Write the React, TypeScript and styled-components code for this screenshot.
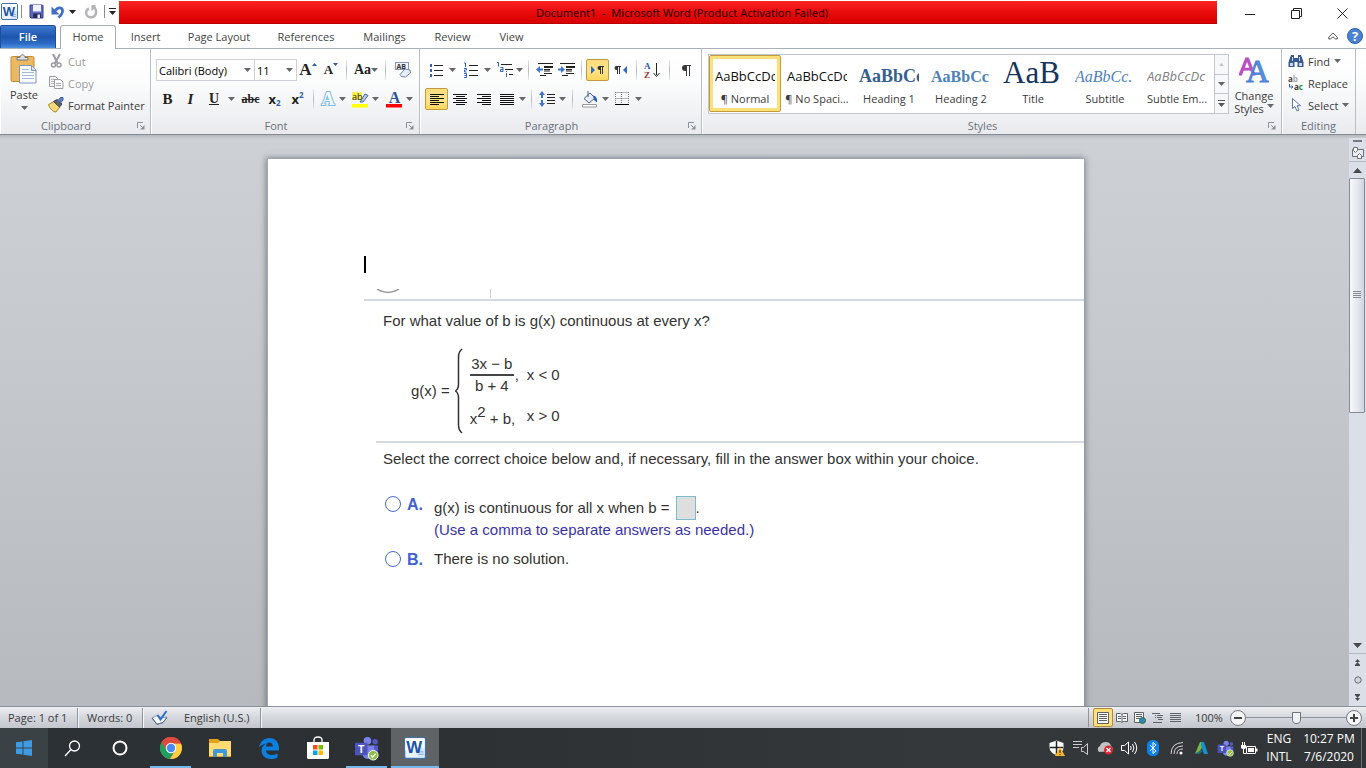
import React from 'react';
import styled, { createGlobalStyle, css } from 'styled-components';

const ui = `'Open Sans', 'Noto Sans', sans-serif`;
const serif = `'Liberation Serif', serif`;

const GlobalStyle = createGlobalStyle`
  * { box-sizing: border-box; }
  body { margin: 0; font-family: ${ui}; font-size: 11px; color: #3b3b3b; overflow: hidden; }
  button, input, select { font: inherit; color: inherit; margin: 0; }
  button { border: 0; padding: 0; background: none; }
  svg { display: block; flex: none; }
  p { margin: 0; }
`;

const Shell = styled.div`
  display: flex;
  flex-direction: column;
  height: 100vh;
  background: #fff;
`;

/* ---------- title bar ---------- */

const TitleBar = styled.header`
  display: flex;
  align-items: flex-start;
  height: 25px;
  flex: none;
`;
const QuickAccess = styled.div`
  display: flex;
  align-items: center;
  width: 119px;
  height: 23px;
`;
const QuickButton = styled.button<{ $w: number }>`
  display: grid;
  place-items: center;
  width: ${(p) => p.$w}px;
  height: 22px;
`;
const QuickDivider = styled.span`
  width: 1px;
  height: 13px;
  background: #8d8d8d;
`;
const TitleText = styled.h1`
  flex: 1;
  margin: 1px 0 0;
  height: 23px;
  line-height: 23px;
  border-bottom: 1px solid #b80000;
  background: linear-gradient(#ff2424, #e80c0c 50%, #d80000);
  color: #2a0000;
  font-family: 'Noto Sans', sans-serif;
  font-size: 11px;
  font-weight: 400;
  text-align: center;
  white-space: pre;
  padding-left: 28px;
`;
const WindowButtons = styled.div`
  display: flex;
  padding-left: 10px;
  margin-right: 1px;
`;
const WindowButton = styled.button`
  display: grid;
  place-items: center;
  width: 46px;
  height: 27px;
`;

/* ---------- tabs ---------- */

const TabRow = styled.nav`
  display: flex;
  height: 24px;
  flex: none;
  border-bottom: 1px solid #aab0b7;
`;
const FileTab = styled.button`
  width: 56px;
  height: 23px;
  margin-right: 4px;
  padding-bottom: 1px;
  border: 1px solid #1e4f9e;
  border-bottom: 0;
  border-radius: 2px 3px 0 0;
  background: linear-gradient(#3d7ad0, #1d55ae 50%, #2d6cc6 80%, #4d8fe0);
  color: #fff;
  font-weight: 600;
`;
const Tab = styled.button<{ $w: number; $active?: boolean }>`
  width: ${(p) => p.$w}px;
  height: 24px;
  padding-bottom: 2px;
  color: #444;
  ${(p) =>
    p.$active &&
    css`
      border: 1px solid #a6acb3;
      border-bottom: 0;
      border-radius: 3px 3px 0 0;
      background: #fff;
    `}
`;
const TabTools = styled.div`
  display: flex;
  align-items: center;
  gap: 9px;
  margin-left: auto;
  padding: 0 3px 2px 0;
`;

/* ---------- ribbon ---------- */

const RibbonBar = styled.section`
  display: flex;
  height: 86px;
  flex: none;
  background: linear-gradient(#fff, #fbfcfc 40%, #e8eaee);
  border-bottom: 1px solid #878c93;
`;
const Group = styled.div<{ $w: number }>`
  display: flex;
  flex-direction: column;
  flex: none;
  width: ${(p) => p.$w}px;
  border-right: 1px solid #b9bec5;
  box-shadow: inset 1px 0 #fff;
`;
const GroupBody = styled.div`
  display: flex;
  height: 68px;
`;
const GroupFoot = styled.div<{ $launch: boolean }>`
  display: flex;
  align-items: center;
  height: 17px;
  padding-right: ${(p) => (p.$launch ? 5 : 0)}px;
  color: #6a7079;
  span {
    flex: 1;
    padding-right: ${(p) => (p.$launch ? 5 : 0)}px;
    text-align: center;
  }
`;
const Rows = styled.div<{ $left: number }>`
  display: flex;
  flex-direction: column;
  gap: 5px;
  padding: 9px 0 0 ${(p) => p.$left}px;
`;
const Row = styled.div`
  display: flex;
  align-items: center;
  height: 24px;
`;
const Tool = styled.button<{ $w: number; $on?: boolean; $left?: number }>`
  display: flex;
  align-items: center;
  justify-content: center;
  flex: none;
  width: ${(p) => p.$w}px;
  height: 22px;
  margin-left: ${(p) => p.$left ?? 0}px;
  font-family: ${serif};
  color: #222;
  ${(p) =>
    p.$on &&
    css`
      border: 1px solid #c29b3b;
      border-radius: 2px;
      background: linear-gradient(#fbdb7c, #fee58a 50%, #ffd75e);
    `}
`;
const Divider = styled.span<{ $w: number }>`
  display: flex;
  justify-content: center;
  flex: none;
  width: ${(p) => p.$w}px;
  height: 20px;
  &::before {
    content: '';
    width: 1px;
    background: linear-gradient(#e4e6ea, #b4b9c0, #e4e6ea);
  }
`;
const Glyph = styled.span<{ $size: number; $bold?: boolean; $italic?: boolean; $line?: string; $color?: string }>`
  font-family: ${serif};
  font-size: ${(p) => p.$size}px;
  line-height: 16px;
  font-weight: ${(p) => (p.$bold ? 700 : 400)};
  font-style: ${(p) => (p.$italic ? 'italic' : 'normal')};
  text-decoration: ${(p) => p.$line ?? 'none'};
  color: ${(p) => p.$color ?? '#222'};
`;
const SansGlyph = styled(Glyph)`
  font-family: ${ui};
`;
const Script = styled.span<{ $up?: boolean }>`
  align-self: ${(p) => (p.$up ? 'flex-start' : 'flex-end')};
  padding: 2px 0;
  font-family: ${ui};
  font-size: 8px;
  line-height: 10px;
  font-weight: 700;
  color: #2a5cab;
`;
const PickerBox = styled.label<{ $w: number }>`
  display: grid;
  align-items: center;
  width: ${(p) => p.$w}px;
  height: 22px;
  margin-right: -1px;
  border: 1px solid #cdd1d7;
  background: #fff;
  select {
    grid-area: 1 / 1;
    appearance: none;
    width: 100%;
    height: 20px;
    padding: 0 2px;
    border: 0;
    background: none;
    color: #000;
  }
  svg {
    grid-area: 1 / 1;
    justify-self: end;
    margin-right: 3px;
    pointer-events: none;
  }
`;
const PasteButton = styled.button`
  display: flex;
  flex-direction: column;
  align-items: center;
  width: 48px;
  padding-top: 5px;
  gap: 3px;
  line-height: 16px;
`;
const ClipList = styled.div`
  display: flex;
  flex-direction: column;
  padding-top: 1px;
`;
const LabelButton = styled.button<{ $muted?: boolean }>`
  display: flex;
  align-items: center;
  gap: 4px;
  height: 22px;
  white-space: nowrap;
  color: ${(p) => (p.$muted ? '#9a9a9a' : '#3b3b3b')};
`;
const EditButton = styled(LabelButton)`
  padding-left: 6px;
`;
const Gallery = styled.div`
  display: flex;
  width: 521px;
  height: 60px;
  margin: 5px 0 0 6px;
  border: 1px solid #c3c7cd;
  background: #fff;
`;
const StyleCell = styled.button<{ $on?: boolean }>`
  display: flex;
  flex-direction: column;
  align-items: center;
  width: 72px;
  height: 57px;
  padding: 4px 2px 0;
  ${(p) =>
    p.$on &&
    css`
      border: 1px solid #c29b3b;
      border-radius: 2px;
      box-shadow: inset 0 0 0 3px #ffdf78;
      padding-top: 3px;
    `}
`;
const Preview = styled.span<{ $font: string; $size: number; $line?: number; $color: string; $bold?: boolean; $italic?: boolean }>`
  width: 60px;
  height: 32px;
  overflow: hidden;
  white-space: nowrap;
  text-align: left;
  font-family: ${(p) => p.$font};
  font-size: ${(p) => p.$size}px;
  line-height: ${(p) => p.$line ?? 35}px;
  font-weight: ${(p) => (p.$bold ? 700 : 400)};
  font-style: ${(p) => (p.$italic ? 'italic' : 'normal')};
  color: ${(p) => p.$color};
`;
const StyleName = styled.span`
  line-height: 16px;
  white-space: nowrap;
`;
const GalleryScroll = styled.div`
  display: flex;
  flex-direction: column;
  margin-left: auto;
  width: 14px;
  border-left: 1px solid #c3c7cd;
  button {
    flex: 1;
    display: grid;
    place-items: center;
    background: #f7f8f9;
  }
  button + button {
    border-top: 1px solid #c3c7cd;
  }
`;
const ChangeStyles = styled.button`
  display: flex;
  flex-direction: column;
  align-items: center;
  width: 50px;
  padding-top: 6px;
  line-height: 13px;
  svg:first-child {
    margin-bottom: 6px;
  }
`;
const Inline = styled.span`
  display: flex;
  align-items: center;
  gap: 3px;
`;

/* ---------- workspace ---------- */

const Workspace = styled.main`
  display: flex;
  flex: 1;
  min-height: 0;
  background: linear-gradient(#b4b8bd, #cdd1d6 4px, #c5c8cc 40%, #b6b9be);
`;
const Canvas = styled.div`
  flex: 1;
  overflow: hidden;
  padding: 24px 0 0 2px;
`;
const Page = styled.article`
  width: 817px;
  height: 1056px;
  margin: 0 auto;
  padding: 97px 0 0 96px;
  background: #fff;
  border-left: 1px solid #a2a8af;
  box-shadow: 0 0 6px 1px rgba(70, 76, 84, 0.6);
`;
const TextCaret = styled.div`
  width: 2px;
  height: 17px;
  margin-bottom: 16px;
  background: #000;
`;
const Worksheet = styled.div`
  font-family: 'Liberation Sans', Arial, sans-serif;
  font-size: 15px;
  line-height: 22px;
  color: #333;
`;
const CutOff = styled.div`
  display: flex;
  gap: 90px;
  height: 10px;
  padding-left: 12px;
`;
const Rule = styled.hr<{ $left: number }>`
  height: 2px;
  margin: 0 0 0 ${(p) => p.$left}px;
  border: 0;
  background: #d3dae4;
`;
const QuestionText = styled.p`
  padding: 9px 0 0 19px;
`;
const Instruction = styled.p`
  padding: 5px 0 0 19px;
`;
const Equation = styled.div`
  display: flex;
  align-items: center;
  gap: 5px;
  height: 86px;
  padding-left: 47px;
  margin: 16px 0 7px;
`;
const Cases = styled.div`
  display: grid;
  grid-template-columns: 57px auto;
  row-gap: 8px;
  align-items: center;
  line-height: 20px;
`;
const Piece = styled.div`
  display: flex;
  align-items: center;
  gap: 1px;
  white-space: nowrap;
  word-spacing: normal;
  sup {
    font-size: 15px;
    line-height: 1;
    vertical-align: 7px;
  }
`;
const Fraction = styled.span`
  display: flex;
  flex-direction: column;
  align-items: center;
  width: 44px;
  span:first-child {
    width: 100%;
    text-align: center;
    border-bottom: 2px solid #444;
  }
`;
const Choices = styled.div`
  display: grid;
  grid-template-columns: 22px 27px auto;
  align-items: start;
  padding: 21px 0 0 21px;
`;
const Radio = styled.input`
  appearance: none;
  width: 16px;
  height: 16px;
  margin-top: 5px;
  border: 1px solid #4a69d6;
  border-radius: 50%;
  outline: 0;
`;
const ChoiceLetter = styled.label`
  font-weight: 700;
  font-size: 16px;
  line-height: 28px;
  color: #4060d2;
`;
const ChoiceBody = styled.div`
  line-height: 22px;
  padding-top: 2px;
`;
const AnswerLine = styled.div`
  display: flex;
  align-items: center;
  height: 22px;
  margin-top: 4px;
`;
const AnswerBox = styled.input`
  width: 20px;
  height: 24px;
  margin-left: 6px;
  border: 1px solid #79bccb;
  background: #dedede;
  border-radius: 0;
`;
const Note = styled.p`
  color: #3a33a6;
  height: 27px;
`;

/* ---------- scroll bar ---------- */

const ScrollColumn = styled.aside`
  display: flex;
  flex-direction: column;
  align-items: center;
  width: 17px;
  margin-top: 3px;
  background: #dbdfe8;
`;
const SplitHandle = styled.span`
  width: 9px;
  height: 2px;
  margin: 2px 0 2px;
  background: #76797e;
`;
const ScrollButton = styled.button<{ $h: number; $line?: boolean }>`
  display: grid;
  place-items: center;
  flex: none;
  width: 17px;
  height: ${(p) => p.$h}px;
  border-bottom: ${(p) => (p.$line ? '1px solid #b4b9c3' : '0')};
`;
const Track = styled.div`
  flex: 1;
  width: 100%;
`;
const Thumb = styled.div`
  display: grid;
  place-items: center;
  width: 16px;
  height: 51%;
  border: 1px solid #868d98;
  border-radius: 1px;
  background: linear-gradient(90deg, #f6f8fb, #e6e9ef 50%, #d0d4df);
`;

/* ---------- status bar ---------- */

const StatusBar = styled.footer`
  display: flex;
  align-items: center;
  height: 22px;
  flex: none;
  border-top: 1px solid #8b9199;
  background: linear-gradient(#eceef1, #d6d9de 45%, #c3c7cd);
`;
const StatusItem = styled.button<{ $w: number; $left?: number }>`
  display: flex;
  align-items: center;
  gap: 15px;
  width: ${(p) => p.$w}px;
  height: 20px;
  padding-left: ${(p) => p.$left ?? 9}px;
  border-right: 1px solid #8f959d;
  box-shadow: 1px 0 #f4f5f7;
  white-space: nowrap;
`;
const Views = styled.div`
  display: flex;
  margin-left: auto;
  padding-left: 4px;
  border-left: 1px solid #8f959d;
`;
const ViewButton = styled.button<{ $on?: boolean }>`
  display: grid;
  place-items: center;
  width: 18px;
  height: 19px;
  ${(p) =>
    p.$on &&
    css`
      width: 20px;
      border: 1px solid #b98a2c;
      border-radius: 2px;
      background: #ffe07c;
    `}
`;
const Zoom = styled.div`
  display: flex;
  align-items: center;
  padding: 0 4px 0 10px;
`;
const ZoomValue = styled.button`
  width: 35px;
  text-align: left;
`;
const ZoomRound = styled.button`
  display: grid;
  place-items: center;
  width: 16px;
  height: 16px;
  border: 1px solid #75797f;
  border-radius: 50%;
  background: #f4f5f7;
`;
const ZoomRange = styled.input`
  appearance: none;
  width: 100px;
  height: 16px;
  background: linear-gradient(#8d939c, #8d939c) center / 100% 1px no-repeat;
  &::-webkit-slider-thumb {
    appearance: none;
    width: 9px;
    height: 12px;
    border: 1px solid #70757c;
    border-radius: 1px 1px 5px 5px;
    background: #f1f2f5;
  }
`;

/* ---------- task bar ---------- */

const TaskBar = styled.footer`
  display: flex;
  height: 40px;
  flex: none;
  background: linear-gradient(90deg, #2b3135, #2c3033 30%, #35383a 70%, #323537);
  color: #fff;
`;
const TaskButton = styled.button<{ $w: number; $open?: boolean; $on?: boolean; $start?: boolean }>`
  display: grid;
  place-items: center;
  width: ${(p) => p.$w}px;
  height: 40px;
  background: ${(p) => (p.$on ? '#5f6365' : p.$start ? '#3a4246' : 'transparent')};
  position: relative;
  ${(p) =>
    (p.$open || p.$on) &&
    css`
      &::after {
        content: '';
        position: absolute;
        bottom: 0;
        left: ${p.$on ? 0 : 4}px;
        right: ${p.$on ? 0 : 4}px;
        height: 2px;
        background: #76b9ed;
      }
    `}
`;
const Pinned = styled.div`
  display: flex;
  padding-left: 2px;
`;
const Tray = styled.div`
  display: flex;
  align-items: center;
  margin-left: auto;
`;
const TrayButton = styled.button`
  display: grid;
  place-items: center;
  width: 24px;
  height: 40px;
`;
const TrayText = styled.div<{ $w: number }>`
  width: ${(p) => p.$w}px;
  font-size: 12px;
  line-height: 18px;
  text-align: center;
  white-space: nowrap;
`;
const ShowDesktop = styled.span`
  width: 5px;
  height: 40px;
  border-left: 1px solid #6d7072;
`;

/* ---------- icons ---------- */

type IconProps = { w: number; h: number; children: React.ReactNode };
const Icon = ({ w, h, children }: IconProps) => (
  <svg width={w} height={h} viewBox={`0 0 ${w} ${h}`} fill="none" aria-hidden="true">
    {children}
  </svg>
);

const Caret = ({ color = '#666' }: { color?: string }) => (
  <Icon w={7} h={4}>
    <path d="M0 0h7L3.500 4z" fill={color} />
  </Icon>
);
const Launcher = () => (
  <Icon w={8} h={8}>
    <path d="M.5 6V.5H6" stroke="#8b9098" />
    <path d="M3 3l3 3" stroke="#8b9098" />
    <path d="M7.500 3v4.500H3z" fill="#8b9098" />
  </Icon>
);
const WordLogo = ({ s }: { s: number }) => (
  <svg width={s} height={s} viewBox="0 0 17 17" aria-hidden="true">
    <rect x=".5" y=".5" width="16" height="16" rx="1.500" fill="#eaf2fb" stroke="#3f72b5" />
    <path d="M1 1h15v8c-5-2-9 3-15 1z" fill="#fff" />
    <path d="M10 8h6v8h-6z" fill="#d9e7f8" />
    <path d="M11 11.500h4M11 13.500h4" stroke="#8fb3df" />
    <text x="7.800" y="12.500" fontFamily="Liberation Sans, sans-serif" fontWeight="700" fontSize="13" textAnchor="middle" fill="#1a55a8">
      W
    </text>
  </svg>
);
const SaveIcon = () => (
  <Icon w={15} h={15}>
    <path d="M1 1h12.500l.5.5V14H2l-1-1z" fill="#6068c8" stroke="#343a98" />
    <path d="M4 1h8v6.500H4z" fill="#f1f3fb" />
    <path d="M4 9.500h8V14H4z" fill="#272b55" />
    <path d="M8.500 10.500h2.500V14H8.500z" fill="#e8eaf5" />
  </Icon>
);
const UndoIcon = () => (
  <Icon w={14} h={14}>
    <path d="M4 6C6.500 2 11 2 11.500 5.500c.3 3-1.500 5-4 7" stroke="#3e6fc4" strokeWidth="2.800" />
    <path d="M.5 1.500v8h8z" fill="#3e6fc4" />
  </Icon>
);
const RedoIcon = () => (
  <Icon w={14} h={14}>
    <path d="M10.500 2.500C12.800 5 12.600 9 10.500 11 8 13 4 12.500 2.700 10 1.500 7.500 2.500 4.500 5 3.500" stroke="#b3b5b8" strokeWidth="2.500" />
    <path d="M7.500 0v6l4-3V0z" fill="#b3b5b8" />
  </Icon>
);
const CustomizeIcon = () => (
  <Icon w={7} h={8}>
    <path d="M0 .5h7" stroke="#222" />
    <path d="M0 3h7L3.500 7z" fill="#222" />
  </Icon>
);
const PasteIcon = () => (
  <Icon w={28} h={30}>
    <rect x="1" y="2.500" width="23" height="25" rx="1.500" fill="#ecb861" stroke="#c38a35" />
    <path d="M7 6V3.500h3C10 0 15 0 15 3.500h3V6z" fill="#dfe1e4" stroke="#75787d" />
    <path d="M9.500 11.500h12l4.500 4.500v13H9.500z" fill="#fbfcff" stroke="#7b95bb" />
    <path d="M21.500 11.500v5H26" fill="#d5e0f1" stroke="#7b95bb" />
    <path d="M12 15.500h7M12 18.500h12M12 21.500h12M12 24.500h12" stroke="#a5b9d6" />
  </Icon>
);
const CutIcon = () => (
  <Icon w={16} h={16}>
    <path d="M5 1l4.500 9M12 1L7 10" stroke="#9a9c9f" strokeWidth="2" />
    <circle cx="5.500" cy="12" r="2" stroke="#9a9c9f" strokeWidth="1.500" />
    <circle cx="11" cy="12" r="2" stroke="#9a9c9f" strokeWidth="1.500" />
  </Icon>
);
const CopyIcon = () => (
  <Icon w={16} h={16}>
    <path d="M1.500 1.500h6l2 2v8h-8z" fill="#f2f2f2" stroke="#9b9da0" />
    <path d="M3 4.500h5M3 6.500h5M3 8.500h5" stroke="#b9bbbd" />
    <path d="M6.500 4.500h6l2.500 2.500v6.500H6.500z" fill="#f7f7f7" stroke="#9b9da0" />
    <path d="M8 8.500h5M8 10.500h5" stroke="#a9abad" />
  </Icon>
);
const PainterIcon = () => (
  <Icon w={16} h={16}>
    <path d="M.5 7.500L6 4.500l6 5.500-4 5c-2.500 0-6.500-3-7.500-7.500z" fill="#f0d978" stroke="#a9882b" />
    <path d="M5.500 4.500L9 2.500l5 4.500-2.500 3z" fill="#5d636c" stroke="#3c4149" />
    <path d="M10 3.500l2.500-3H15V3l-2.500 3z" fill="#5f83c8" stroke="#3f5b92" />
  </Icon>
);
const ClearIcon = () => (
  <Icon w={18} h={18}>
    <rect x="1.500" y="1.500" width="13" height="7" fill="#f3f6fc" stroke="#8397bf" />
    <text x="2.500" y="8" fontFamily="Open Sans, sans-serif" fontSize="7" fontWeight="700" fill="#333">
      AB
    </text>
    <path d="M6 13.500l5-5.500 5 1 .5 3-5 4-4-.5z" fill="#e9edf7" stroke="#7382a6" />
  </Icon>
);
const TextFxIcon = () => (
  <Icon w={18} h={18}>
    <text
      x="9"
      y="15"
      textAnchor="middle"
      fontFamily="Liberation Serif, serif"
      fontSize="18"
      fontWeight="700"
      fill="#f2f9ff"
      stroke="#7db8e6"
      strokeWidth="2"
      paintOrder="stroke"
    >
      A
    </text>
  </Icon>
);
const HighlightIcon = () => (
  <Icon w={17} h={17}>
    <path d="M0 1h10v8H0z" fill="#f5ee55" />
    <text x="0" y="9" fontFamily="Open Sans, sans-serif" fontSize="9" fill="#222">
      ab
    </text>
    <path d="M8 11l5-8 3 1.500-5 6.500z" fill="#bccdea" stroke="#4b6596" />
    <path d="M0 13h16v3.500H0z" fill="#ffff00" />
  </Icon>
);
const FontColorIcon = () => (
  <Icon w={17} h={17}>
    <text x="8.500" y="12" textAnchor="middle" fontFamily="Liberation Serif, serif" fontSize="16" fontWeight="700" fill="#2f528f">
      A
    </text>
    <path d="M0 13h16v3.500H0z" fill="#ff0000" />
  </Icon>
);
const BulletsIcon = () => (
  <Icon w={14} h={14}>
    <path d="M5 2.500h9M5 7.500h9M5 12.500h9" stroke="#222" />
    <path d="M1 1h2v3H1zM1 6h2v3H1zM1 11h2v3H1z" fill="#2f62b5" />
  </Icon>
);
const NumberingIcon = () => (
  <Icon w={16} h={16}>
    <path d="M6 3.500h9M6 8.500h9M6 13.500h9" stroke="#222" />
    <path d="M1 1h1.500v4M1 6.500h2.500v1.500H1.500V10h2M1 11.500h2.500v4H1M1.500 13.500h2" stroke="#2f62b5" />
  </Icon>
);
const MultilevelIcon = () => (
  <Icon w={18} h={16}>
    <path d="M5 2.500h11M9 7.500h8M13 12.500h4" stroke="#222" />
    <path d="M1 .5h1.500v4M4.500 5.500H7v4H4.500V7.500H7M10.500 9v1M10.500 11v4" stroke="#2f62b5" />
  </Icon>
);
const IndentIcon = ({ right }: { right?: boolean }) => (
  <Icon w={17} h={14}>
    <path d="M2 .5h15M8 8h6M8 10.500h8M4 12.500h6" stroke="#222" />
    <path d="M8 3h9v2H8zM8 6h6v1H8z" fill="#222" />
    <path d={right ? 'M7 6.500L3 3v2.500H0v2h3V10z' : 'M0 6.500L4 3v2.500h3v2H4V10z'} fill="#3d74d0" />
  </Icon>
);
const DirectionIcon = ({ rtl }: { rtl?: boolean }) => (
  <Icon w={13} h={12}>
    <path d={rtl ? 'M13 2v8L9 6z' : 'M0 2v8l4-4z'} fill="#3568c0" />
    <g transform={rtl ? 'translate(-6 0)' : undefined}>
      <path d="M13 2.500H9M9.500 2v8M11.500 2v8" stroke="#333" />
      <path d="M8.500 2h1v4h-1a2 2 0 010-4z" fill="#333" />
    </g>
  </Icon>
);
const SortIcon = () => (
  <Icon w={16} h={18}>
    <text x="0" y="8" fontFamily="Liberation Serif, serif" fontSize="9" fontWeight="700" fill="#2c58a8">
      A
    </text>
    <text x="0" y="17" fontFamily="Liberation Serif, serif" fontSize="9" fontWeight="700" fill="#99333a">
      Z
    </text>
    <path d="M12.500 2v12M9.500 12l3 3.500 3-3.500" stroke="#222" />
  </Icon>
);
const PilcrowIcon = () => (
  <Icon w={12} h={13}>
    <path d="M11 1.500H5.500M6.500 1v11M9.500 1v11" stroke="#3a3a3a" />
    <path d="M6.500 1v6H5a3 3 0 010-6z" fill="#3a3a3a" />
  </Icon>
);
const AlignIcon = ({ kind }: { kind: 'l' | 'c' | 'r' | 'j' }) => {
  const d = {
    l: 'M0 1.500h14M0 3.500h9M0 5.500h14M0 7.500h9M0 9.500h14M0 11.500h9',
    c: 'M0 1.500h14M3 3.500h9M0 5.500h14M3 7.500h9M0 9.500h14M3 11.500h9',
    r: 'M0 1.500h14M5 3.500h9M0 5.500h14M5 7.500h9M0 9.500h14M5 11.500h9',
    j: 'M0 1.500h14M0 3.500h14M0 5.500h14M0 7.500h14M0 9.500h14M0 11.500h14',
  }[kind];
  return (
    <Icon w={14} h={13}>
      <path d={d} stroke="#111" />
    </Icon>
  );
};
const SpacingIcon = () => (
  <Icon w={16} h={16}>
    <path d="M8 3.500h8M8 6.500h8M8 9.500h8M8 12.500h8" stroke="#222" />
    <path d="M3 2v5M3 9v5" stroke="#3d74d0" strokeWidth="2" />
    <path d="M3 0l3 4H0zM3 16l3-4H0z" fill="#3d74d0" />
  </Icon>
);
const FillIcon = () => (
  <Icon w={17} h={17}>
    <path d="M3 7.500L9 2l5 5-6 5z" fill="#e7ecf6" stroke="#4d5f85" />
    <path d="M7 0v6" stroke="#4d5f85" />
    <path d="M12 4.500c3 0 4.500 3 4 7L13 9z" fill="#2f62b5" />
    <path d="M1.500 13.500h14v2.500h-14z" fill="#fff" stroke="#999" />
  </Icon>
);
const BordersIcon = () => (
  <Icon w={14} h={14}>
    <path d="M.5.5h13M.5 6.500h13M.5 0v12M6.500 0v12M13.500 0v12" stroke="#777" strokeDasharray="1 1" />
    <path d="M0 12.500h14" stroke="#000" />
  </Icon>
);
const ChangeStylesIcon = () => (
  <Icon w={30} h={28}>
    <text x="0" y="20" fontFamily="Liberation Sans, sans-serif" fontSize="24" fill="#b64fc0" stroke="#b64fc0">
      A
    </text>
    <text x="7" y="27" fontFamily="Liberation Serif, serif" fontSize="32" fill="#5b93e0" stroke="#4a80d4">
      A
    </text>
  </Icon>
);
const FindIcon = () => (
  <Icon w={16} h={14}>
    <path d="M3 1h3v3h4V1h3l2.500 7v5h-6V8h-3v5h-6V8z" fill="#38598f" />
    <path d="M2 9h3v3H2zM11 9h3v3h-3zM4 3h1v4H4zM11 3h1v4h-1z" fill="#c9d8ef" />
  </Icon>
);
const ReplaceIcon = () => (
  <Icon w={16} h={16}>
    <text x="0" y="7" fontFamily="Open Sans, sans-serif" fontSize="8" fontWeight="700" fill="#444">
      a<tspan fill="#aaa">b</tspan>
    </text>
    <text x="6" y="15" fontFamily="Open Sans, sans-serif" fontSize="8" fontWeight="700" fill="#333">
      a<tspan fill="#1d8a2c">c</tspan>
    </text>
    <path d="M1.500 9v3H5M3.500 10.500L5 12l-1.500 1.500" stroke="#3862a8" />
  </Icon>
);
const SelectIcon = () => (
  <Icon w={16} h={16}>
    <path d="M4.500 1.500v10l2.500-2 2 4.500 2-1-2-4.300h3.500z" fill="#fff" stroke="#5b74a0" />
  </Icon>
);
const ProofIcon = () => (
  <Icon w={18} h={16}>
    <path d="M1 8l6-3 3 3 6-1-4 5.500L6 14z" fill="#f6f8fc" stroke="#8595b8" />
    <path d="M1 8l5 6.500 6-2 4-5" stroke="#51658f" />
    <path d="M6.500 5l3 4.500L15.500 1" stroke="#2d6fd0" strokeWidth="2" />
  </Icon>
);

/* ---------- small composed parts ---------- */

type SplitProps = { children: React.ReactNode; w?: number; left?: number; gap?: number; label: string };
const Split = ({ children, w = 20, left = 0, gap = 1, label }: SplitProps) => (
  <>
    <Tool $w={w} $left={left} aria-label={label}>
      {children}
    </Tool>
    <Tool $w={8} $left={gap} aria-label={`${label} options`}>
      <Caret />
    </Tool>
  </>
);

type RibbonGroupProps = { w: number; name: string; launcher?: boolean; children: React.ReactNode };
const RibbonGroup = ({ w, name, launcher = true, children }: RibbonGroupProps) => (
  <Group $w={w}>
    <GroupBody>{children}</GroupBody>
    <GroupFoot $launch={launcher}>
      <span>{name}</span>
      {launcher && (
        <button aria-label={`${name} options`}>
          <Launcher />
        </button>
      )}
    </GroupFoot>
  </Group>
);

const tabs: [string, number][] = [
  ['Insert', 59],
  ['Page Layout', 88],
  ['References', 86],
  ['Mailings', 71],
  ['Review', 65],
  ['View', 53],
];

const styleCells = [
  { name: '¶ Normal', text: 'AaBbCcDc', font: ui, size: 13, color: '#111', on: true },
  { name: '¶ No Spaci...', text: 'AaBbCcDc', font: ui, size: 13, color: '#111' },
  { name: 'Heading 1', text: 'AaBbCc', font: serif, size: 18, color: '#365f91', bold: true },
  { name: 'Heading 2', text: 'AaBbCc', font: serif, size: 16, color: '#4f81bd', bold: true },
  { name: 'Title', text: 'AaB', font: serif, size: 31, line: 28, color: '#17365d' },
  { name: 'Subtitle', text: 'AaBbCc.', font: serif, size: 16, color: '#4f81bd', italic: true },
  { name: 'Subtle Em...', text: 'AaBbCcDc', font: ui, size: 13, color: '#808080', italic: true },
];

const Ribbon = () => (
  <RibbonBar>
    <RibbonGroup w={151} name="Clipboard">
      <PasteButton>
        <PasteIcon />
        <span>Paste</span>
        <Caret />
      </PasteButton>
      <ClipList>
        <LabelButton $muted>
          <CutIcon />
          Cut
        </LabelButton>
        <LabelButton $muted>
          <CopyIcon />
          Copy
        </LabelButton>
        <LabelButton>
          <PainterIcon />
          Format Painter
        </LabelButton>
      </ClipList>
    </RibbonGroup>

    <RibbonGroup w={269} name="Font">
      <Rows $left={5}>
        <Row>
          <PickerBox $w={99}>
            <select aria-label="Font">
              <option>Calibri (Body)</option>
            </select>
            <Caret />
          </PickerBox>
          <PickerBox $w={43}>
            <select aria-label="Font size">
              <option>11</option>
            </select>
            <Caret />
          </PickerBox>
          <Tool $w={24} aria-label="Grow font">
            <Glyph $size={17} $bold>
              A
            </Glyph>
            <Icon w={5} h={14}>
              <path d="M0 3h5L2.500 0z" fill="#2a5cab" />
            </Icon>
          </Tool>
          <Tool $w={22} aria-label="Shrink font">
            <Glyph $size={13} $bold>
              A
            </Glyph>
            <Icon w={5} h={14}>
              <path d="M0 0h5L2.500 3z" fill="#2a5cab" />
            </Icon>
          </Tool>
          <Divider $w={9} />
          <Tool $w={28} $left={1} aria-label="Change case">
            <Glyph $size={14} $bold>
              Aa
            </Glyph>
            <Caret />
          </Tool>
          <Divider $w={11} />
          <Tool $w={24} aria-label="Clear formatting">
            <ClearIcon />
          </Tool>
        </Row>
        <Row>
          <Tool $w={23} aria-label="Bold">
            <Glyph $size={15} $bold>
              B
            </Glyph>
          </Tool>
          <Tool $w={23} aria-label="Italic">
            <Glyph $size={15} $bold $italic>
              I
            </Glyph>
          </Tool>
          <Split w={24} label="Underline">
            <Glyph $size={14} $bold $line="underline">
              U
            </Glyph>
          </Split>
          <Tool $w={25} $left={3} aria-label="Strikethrough">
            <Glyph $size={12} $bold $line="line-through">
              abc
            </Glyph>
          </Tool>
          <Tool $w={23} aria-label="Subscript">
            <SansGlyph $size={13} $bold>
              x
            </SansGlyph>
            <Script>2</Script>
          </Tool>
          <Tool $w={23} aria-label="Superscript">
            <SansGlyph $size={13} $bold>
              x
            </SansGlyph>
            <Script $up>2</Script>
          </Tool>
          <Divider $w={9} />
          <Split label="Text effects" gap={0}>
            <TextFxIcon />
          </Split>
          <Split left={4} label="Highlight">
            <HighlightIcon />
          </Split>
          <Split left={5} label="Font colour">
            <FontColorIcon />
          </Split>
        </Row>
      </Rows>
    </RibbonGroup>

    <RibbonGroup w={282} name="Paragraph">
      <Rows $left={5}>
        <Row>
          <Split w={22} label="Bullets">
            <BulletsIcon />
          </Split>
          <Split w={22} left={4} label="Numbering">
            <NumberingIcon />
          </Split>
          <Split w={20} left={4} label="Multilevel list" gap={0}>
            <MultilevelIcon />
          </Split>
          <Divider $w={10} />
          <Tool $w={22} aria-label="Decrease indent">
            <IndentIcon />
          </Tool>
          <Tool $w={22} aria-label="Increase indent">
            <IndentIcon right />
          </Tool>
          <Divider $w={9} />
          <Tool $w={23} $on aria-label="Left to right">
            <DirectionIcon />
          </Tool>
          <Tool $w={23} aria-label="Right to left">
            <DirectionIcon rtl />
          </Tool>
          <Divider $w={8} />
          <Tool $w={24} aria-label="Sort">
            <SortIcon />
          </Tool>
          <Divider $w={11} />
          <Tool $w={22} aria-label="Show marks">
            <PilcrowIcon />
          </Tool>
        </Row>
        <Row>
          <Tool $w={23} $on aria-label="Align left">
            <AlignIcon kind="l" />
          </Tool>
          <Tool $w={24} aria-label="Centre">
            <AlignIcon kind="c" />
          </Tool>
          <Tool $w={24} aria-label="Align right">
            <AlignIcon kind="r" />
          </Tool>
          <Split w={22} label="Justify" gap={0}>
            <AlignIcon kind="j" />
          </Split>
          <Divider $w={10} />
          <Split w={22} label="Line spacing" gap={0}>
            <SpacingIcon />
          </Split>
          <Divider $w={12} />
          <Split w={22} label="Shading">
            <FillIcon />
          </Split>
          <Split w={22} left={2} label="Borders">
            <BordersIcon />
          </Split>
        </Row>
      </Rows>
    </RibbonGroup>

    <RibbonGroup w={580} name="Styles">
      <Gallery>
        {styleCells.map((s) => (
          <StyleCell key={s.name} $on={s.on}>
            <Preview $font={s.font} $size={s.size} $line={s.line} $color={s.color} $bold={s.bold} $italic={s.italic}>
              {s.text}
            </Preview>
            <StyleName>{s.name}</StyleName>
          </StyleCell>
        ))}
        <GalleryScroll>
          <button aria-label="Previous styles">
            <Icon w={7} h={4}>
              <path d="M1 4h5L3.500 1z" fill="#c0c3c7" />
            </Icon>
          </button>
          <button aria-label="Next styles">
            <Caret />
          </button>
          <button aria-label="More styles">
            <Icon w={7} h={7}>
              <path d="M0 .5h7" stroke="#555" />
              <path d="M0 3h7L3.500 7z" fill="#555" />
            </Icon>
          </button>
        </GalleryScroll>
      </Gallery>
      <ChangeStyles>
        <ChangeStylesIcon />
        <span>Change</span>
        <Inline>
          Styles <Caret />
        </Inline>
      </ChangeStyles>
    </RibbonGroup>

    <RibbonGroup w={74} name="Editing" launcher={false}>
      <ClipList>
        <EditButton>
          <FindIcon />
          Find <Caret />
        </EditButton>
        <EditButton>
          <ReplaceIcon />
          Replace
        </EditButton>
        <EditButton>
          <SelectIcon />
          Select <Caret />
        </EditButton>
      </ClipList>
    </RibbonGroup>
  </RibbonBar>
);

const viewPaths = [
  'M.5.5h11v11H.5zM2 2.500h8M2 4.500h8M2 6.500h8M2 8.500h8',
  'M.5 1.500h4l1.500 1 1.500-1h4v8h-4l-1.500 1-1.500-1h-4zM6 2v8M2 4.500h3M2 6.500h3M7 4.500h3M7 6.500h3',
  'M.5.5h9v10h-9zM2 2.500h6M2 4.500h6M2 6.500h4',
  'M0 1.500h8M3 3.500h1M5 3.500h6M3 5.500h1M5 5.500h5M6 7.500h5M1 10.500h9',
  'M0 1.500h11M0 3.500h11M0 5.500h11M0 7.500h11M0 9.500h11',
];

const Question = () => (
  <>
    <QuestionText>For what value of b is g(x) continuous at every x?</QuestionText>
    <Equation>
      <span>g(x) =</span>
      <Icon w={10} h={86}>
        <path d="M7 1Q3.500 4 3.500 9v27q0 5-3 7 3 2 3 7v27q0 5 3.500 8" stroke="#333" strokeWidth="1.500" />
      </Icon>
      <Cases>
        <Piece>
          <Fraction>
            <span>3x − b</span>
            <span>b + 4</span>
          </Fraction>
          ,
        </Piece>
        <span>x &lt; 0</span>
        <Piece>
          <span>
            x<sup>2</sup> + b,
          </span>
        </Piece>
        <span>x &gt; 0</span>
      </Cases>
    </Equation>
    <Rule $left={12} />
    <Instruction>Select the correct choice below and, if necessary, fill in the answer box within your choice.</Instruction>
    <Choices>
      <Radio type="radio" name="choice" id="choice-a" />
      <ChoiceLetter htmlFor="choice-a">A.</ChoiceLetter>
      <ChoiceBody>
        <AnswerLine>
          g(x) is continuous for all x when b =<AnswerBox aria-label="Value of b" />.
        </AnswerLine>
        <Note>(Use a comma to separate answers as needed.)</Note>
      </ChoiceBody>
      <Radio type="radio" name="choice" id="choice-b" />
      <ChoiceLetter htmlFor="choice-b">B.</ChoiceLetter>
      <ChoiceBody>There is no solution.</ChoiceBody>
    </Choices>
  </>
);

const TeamsMark = ({ s }: { s: number }) => (
  <svg width={s} height={s} viewBox="0 0 26 26" aria-hidden="true">
    <circle cx="14" cy="5" r="4" fill="#7b83eb" />
    <circle cx="22" cy="6" r="2.800" fill="#5059c9" />
    <path d="M17 10h8v7q0 5-5 5h-3z" fill="#5059c9" />
    <path d="M9 10h12v8q0 6-6 6t-6-6z" fill="#7b83eb" />
    <rect x="1" y="7" width="13" height="13" rx="1" fill="#4b53bc" />
    <text x="7.500" y="17.500" textAnchor="middle" fontFamily="Liberation Sans, sans-serif" fontSize="11" fontWeight="700" fill="#fff">
      T
    </text>
    <circle cx="20" cy="20" r="5" fill="#8cbd3c" stroke="#fff" />
    <path d="M17.500 20l2 2 3-3.500" stroke="#fff" strokeWidth="1.500" fill="none" />
  </svg>
);

const Tasks = () => (
  <TaskBar>
    <TaskButton $w={48} $start aria-label="Start">
      <Icon w={16} h={16}>
        <path d="M0 2.300L6.500 1.400v6.100H0zM7.500 1.200L16 0v7.500H7.500zM0 8.500h6.500v6.100L0 13.700zM7.500 8.500H16V16l-8.500-1.200z" fill="#3f9be6" />
      </Icon>
    </TaskButton>
    <TaskButton $w={48} aria-label="Search">
      <Icon w={17} h={17}>
        <circle cx="10.500" cy="6" r="5" stroke="#fff" strokeWidth="1.300" />
        <path d="M7 9.500L1 16" stroke="#fff" strokeWidth="1.300" />
      </Icon>
    </TaskButton>
    <TaskButton $w={48} aria-label="Cortana">
      <Icon w={16} h={16}>
        <circle cx="8" cy="8" r="6.500" stroke="#fff" strokeWidth="2" />
      </Icon>
    </TaskButton>
    <Pinned>
      <TaskButton $w={49} $open aria-label="Chrome">
        <Icon w={22} h={22}>
          <circle cx="11" cy="11" r="11" fill="#dd4b3e" />
          <path d="M1.500 5.500A11 11 0 0010 22l5-9-4-7z" fill="#1fa15d" />
          <path d="M21 6.500A11 11 0 0110 22l5.500-9L11 6z" fill="#fdd03f" />
          <path d="M1.500 5.500A11 11 0 0121 6.500H11L6.500 13z" fill="#dd4b3e" />
          <circle cx="11" cy="11" r="5.200" fill="#fff" />
          <circle cx="11" cy="11" r="4.200" fill="#4a8af4" />
        </Icon>
      </TaskButton>
      <TaskButton $w={49} aria-label="File Explorer">
        <Icon w={22} h={18}>
          <path d="M0 0h9l2 2h11v16H0z" fill="#e3a21a" />
          <path d="M0 4h9l2-2h11v15H0z" fill="#ffdb70" />
          <path d="M4 18v-6q0-2 2-2h10q2 0 2 2v6h-4v-4H8v4z" fill="#3f98d8" />
        </Icon>
      </TaskButton>
      <TaskButton $w={49} aria-label="Edge">
        <Icon w={20} h={21}>
          <path
            d="M0 9.500C1 4 5 0 10.500 0 16.500 0 20 4.500 20 10v2.500H7c0 3 3 4.500 6 4.500 2 0 4-.6 5.500-1.500v4C16.500 20.500 14.500 21 12 21 6 21 2.500 17 2.500 12.500c0-3 2-6 5-7C4 6 1.500 7.500 0 9.500zM7 8.500h6.800c0-2.500-1.500-4-3.500-4S7.300 6 7 8.500z"
            fill="#0c7fe0"
          />
        </Icon>
      </TaskButton>
      <TaskButton $w={49} aria-label="Store">
        <Icon w={24} h={24}>
          <path d="M8 7V4q0-3 4-3t4 3v3" stroke="#fff" strokeWidth="1.300" />
          <path d="M1 6h22v16l-1 1H2l-1-1z" fill="#fff" />
          <path d="M7 9h4.500v4.500H7z" fill="#f25022" />
          <path d="M12.500 9H17v4.500h-4.500z" fill="#7fba00" />
          <path d="M7 14.500h4.500V19H7z" fill="#00a4ef" />
          <path d="M12.500 14.500H17V19h-4.500z" fill="#ffb900" />
        </Icon>
      </TaskButton>
      <TaskButton $w={49} $open aria-label="Teams">
        <TeamsMark s={25} />
      </TaskButton>
      <TaskButton $w={48} $on aria-label="Word">
        <WordLogo s={22} />
      </TaskButton>
    </Pinned>
    <Tray>
      <TrayButton aria-label="Security">
        <Icon w={16} h={16}>
          <path d="M7.500.5L14.500 3v4q0 5.500-7 8.500-7-3-7-8.500V3z" fill="#fff" />
          <path d="M7.500 1v14M1 7.500h13" stroke="#222" strokeWidth="1.500" />
          <path d="M11 7l5 9H6z" fill="#f8b62d" />
          <path d="M11 10v3M11 14v1" stroke="#222" />
        </Icon>
      </TrayButton>
      <TrayButton aria-label="Audio manager">
        <Icon w={17} h={16}>
          <path d="M0 1.500h9M0 4.500h9M0 7.500h6" stroke="#ccc" />
          <path d="M8.500 7.500h2l4-4v11l-4-3h-2z" stroke="#ccc" />
        </Icon>
      </TrayButton>
      <TrayButton aria-label="OneDrive">
        <Icon w={17} h={14}>
          <path d="M2 11q-3-4 1-6 1-4 6-4 4 0 5 4 2 1 2 5z" fill="#bfc1c2" />
          <circle cx="11.500" cy="9" r="4.500" fill="#d9252f" />
          <path d="M9.500 7l4 4M13.500 7l-4 4" stroke="#fff" strokeWidth="1.300" />
        </Icon>
      </TrayButton>
      <TrayButton aria-label="Volume">
        <Icon w={17} h={14}>
          <path d="M.5 4.500h3l4-3.500v12l-4-3.500h-3zM9.500 5q1.500 2 0 4M11.500 3q3 4 0 8M13.500 1q4.500 6 0 12" stroke="#fff" />
        </Icon>
      </TrayButton>
      <TrayButton aria-label="Bluetooth">
        <Icon w={12} h={16}>
          <rect width="12" height="16" rx="5.500" fill="#0a84ea" />
          <path d="M3 5l6 6-3 2.500v-11L9 5l-6 6" stroke="#fff" />
        </Icon>
      </TrayButton>
      <TrayButton aria-label="Wireless">
        <Icon w={14} h={14}>
          <path d="M1 13Q1 2 13 1.500M4 13q0-8 9-8M7 13q0-5 6-5" stroke="#d5d5d5" />
          <circle cx="11" cy="12" r="1.500" fill="#fff" />
        </Icon>
      </TrayButton>
      <TrayButton aria-label="Autodesk">
        <Icon w={13} h={12}>
          <path d="M0 12L5 0h3l1 3-5 7z" fill="#7fb53c" />
          <path d="M6 0h3l4 12H9L6 4z" fill="#1593c8" />
          <path d="M0 12l6-4 2 1-4 3z" fill="#1d6f8c" />
        </Icon>
      </TrayButton>
      <TrayButton aria-label="Teams status">
        <TeamsMark s={17} />
      </TrayButton>
      <TrayButton aria-label="Battery">
        <Icon w={17} h={13}>
          <path d="M5.500 4.500h9v7h-9z" stroke="#fff" />
          <path d="M7 6h6v4H7zM15 6.500h1.500v3H15zM0 3h5v3L3.500 7h-2L0 6z" fill="#fff" />
          <path d="M1.500 0v3M3.500 0v3M2.500 7v4.500H5" stroke="#fff" />
        </Icon>
      </TrayButton>
      <TrayText $w={36}>
        ENG
        <br />
        INTL
      </TrayText>
      <TrayText $w={64}>
        10:27 PM
        <br />
        7/6/2020
      </TrayText>
      <ShowDesktop />
    </Tray>
  </TaskBar>
);

const App = () => (
  <>
    <GlobalStyle />
    <Shell>
      <TitleBar>
        <QuickAccess>
          <QuickButton $w={18} aria-label="Word">
            <WordLogo s={17} />
          </QuickButton>
          <QuickButton $w={3} as="span" />
          <QuickDivider />
          <QuickButton $w={28} aria-label="Save">
            <SaveIcon />
          </QuickButton>
          <QuickButton $w={16} aria-label="Undo">
            <UndoIcon />
          </QuickButton>
          <QuickButton $w={12} aria-label="Undo history">
            <Caret color="#222" />
          </QuickButton>
          <QuickButton $w={26} aria-label="Redo">
            <RedoIcon />
          </QuickButton>
          <QuickDivider />
          <QuickButton $w={14} aria-label="Customize toolbar">
            <CustomizeIcon />
          </QuickButton>
        </QuickAccess>
        <TitleText>{'Document1  -  Microsoft Word (Product Activation Failed)'}</TitleText>
        <WindowButtons>
          <WindowButton aria-label="Minimize">
            <Icon w={10} h={10}>
              <path d="M0 5.500h10" stroke="#222" />
            </Icon>
          </WindowButton>
          <WindowButton aria-label="Restore">
            <Icon w={11} h={11}>
              <path d="M.5 2.500h8v8h-8zM2.500 2V.5h8v8H9" stroke="#222" />
            </Icon>
          </WindowButton>
          <WindowButton aria-label="Close">
            <Icon w={11} h={11}>
              <path d="M.5.5l10 10M10.500.5l-10 10" stroke="#222" />
            </Icon>
          </WindowButton>
        </WindowButtons>
      </TitleBar>

      <TabRow>
        <FileTab>File</FileTab>
        <Tab $w={56} $active>
          Home
        </Tab>
        {tabs.map(([name, w]) => (
          <Tab key={name} $w={w}>
            {name}
          </Tab>
        ))}
        <TabTools>
          <button aria-label="Minimize the ribbon">
            <Icon w={10} h={8}>
              <path d="M.8 5L5 1l4.200 4v2H7.500L5 4.800 2.500 7H.8z" stroke="#555" />
            </Icon>
          </button>
          <button aria-label="Help">
            <Icon w={16} h={16}>
              <circle cx="8" cy="8" r="7.500" fill="#4a83d4" stroke="#2d5fae" />
              <text x="8" y="13" textAnchor="middle" fontFamily="Open Sans, sans-serif" fontSize="13" fontWeight="700" fill="#fff">
                ?
              </text>
            </Icon>
          </button>
        </TabTools>
      </TabRow>

      <Ribbon />

      <Workspace>
        <Canvas>
          <Page>
            <TextCaret />
            <Worksheet>
              <CutOff>
                <Icon w={24} h={5}>
                  <path d="M1 0q11 7 22 0" stroke="#999" strokeWidth="1.500" />
                </Icon>
                <Icon w={2} h={9}>
                  <path d="M.5 0v9" stroke="#c3cedb" />
                </Icon>
              </CutOff>
              <Rule $left={0} />
              <Question />
            </Worksheet>
          </Page>
        </Canvas>
        <ScrollColumn>
          <SplitHandle />
          <ScrollButton $h={18} $line aria-label="View ruler">
            <Icon w={12} h={12}>
              <path d="M.5 2.500h11v7H.5z" fill="#e9ecf2" stroke="#6b7078" />
              <path d="M1.500.5h4v3l-2 2-2-2zM5.500 11.500h4v-3l-2-2-2 2z" fill="#fff" stroke="#6b7078" />
            </Icon>
          </ScrollButton>
          <ScrollButton $h={16} aria-label="Scroll up">
            <Icon w={9} h={5}>
              <path d="M0 5h9L4.500 0z" fill="#44484e" />
            </Icon>
          </ScrollButton>
          <Track>
            <Thumb>
              <Icon w={8} h={8}>
                <path d="M0 .5h8M0 2.500h8M0 4.500h8M0 6.500h8" stroke="#868b94" />
              </Icon>
            </Thumb>
          </Track>
          <ScrollButton $h={16} $line aria-label="Scroll down">
            <Icon w={9} h={5}>
              <path d="M0 0h9L4.500 5z" fill="#44484e" />
            </Icon>
          </ScrollButton>
          <ScrollButton $h={17} aria-label="Previous page">
            <Icon w={5} h={7}>
              <path d="M0 3h5L2.500 0zM0 6h5L2.500 3zM0 7V6h5v1z" fill="#44484e" />
            </Icon>
          </ScrollButton>
          <ScrollButton $h={17} aria-label="Browse object">
            <Icon w={8} h={8}>
              <circle cx="4" cy="4" r="3.200" fill="#cfd3da" stroke="#6b6f76" />
            </Icon>
          </ScrollButton>
          <ScrollButton $h={18} aria-label="Next page">
            <Icon w={5} h={7}>
              <path d="M0 0h5v1H0zM0 1h5L2.500 4zM0 4h5L2.500 7z" fill="#44484e" />
            </Icon>
          </ScrollButton>
        </ScrollColumn>
      </Workspace>

      <StatusBar>
        <StatusItem $w={78} $left={8}>
          Page: 1 of 1
        </StatusItem>
        <StatusItem $w={65}>Words: 0</StatusItem>
        <StatusItem $w={118} $left={8}>
          <ProofIcon />
          English (U.S.)
        </StatusItem>
        <Views>
          {viewPaths.map((d, i) => (
            <ViewButton key={d} $on={i === 0} aria-label={`View ${i + 1}`}>
              <Icon w={12} h={12}>
                <path d={d} stroke="#5d6269" fill={i < 3 ? '#f8f8f8' : 'none'} />
                {i === 2 && <circle cx="8.500" cy="8.500" r="3" fill="#2f86b8" stroke="#2b6f4a" />}
              </Icon>
            </ViewButton>
          ))}
        </Views>
        <Zoom>
          <ZoomValue>100%</ZoomValue>
          <ZoomRound aria-label="Zoom out">
            <Icon w={8} h={8}>
              <path d="M0 4h8" stroke="#444" strokeWidth="2" />
            </Icon>
          </ZoomRound>
          <ZoomRange type="range" aria-label="Zoom" defaultValue={50} />
          <ZoomRound aria-label="Zoom in">
            <Icon w={8} h={8}>
              <path d="M0 4h8M4 0v8" stroke="#444" strokeWidth="2" />
            </Icon>
          </ZoomRound>
        </Zoom>
      </StatusBar>

      <Tasks />
    </Shell>
  </>
);

export default App;
